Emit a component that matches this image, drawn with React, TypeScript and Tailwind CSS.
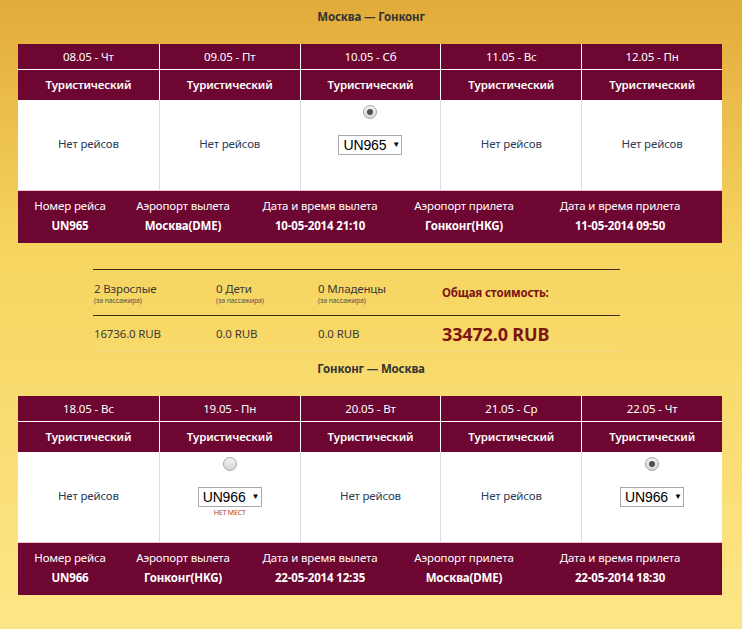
import React from 'react';

type Day = {
    date: string;
    flight?: string;
    checked?: boolean;
    noSeats?: boolean;
};

type Leg = {
    title: string;
    days: Day[];
    info: string[];
};

const legs: Leg[] = [
    {
        title: "Москва — Гонконг",
        days: [
            { date: "08.05 - Чт" },
            { date: "09.05 - Пт" },
            { date: "10.05 - Сб", flight: "UN965", checked: true },
            { date: "11.05 - Вс" },
            { date: "12.05 - Пн" },
        ],
        info: ["UN965", "Москва(DME)", "10-05-2014 21:10", "Гонконг(HKG)", "11-05-2014 09:50"],
    },
    {
        title: "Гонконг — Москва",
        days: [
            { date: "18.05 - Вс" },
            { date: "19.05 - Пн", flight: "UN966", noSeats: true },
            { date: "20.05 - Вт" },
            { date: "21.05 - Ср" },
            { date: "22.05 - Чт", flight: "UN966", checked: true },
        ],
        info: ["UN966", "Гонконг(HKG)", "22-05-2014 12:35", "Москва(DME)", "22-05-2014 18:30"],
    },
];

const labels = ["Номер рейса", "Аэропорт вылета", "Дата и время вылета", "Аэропорт прилета", "Дата и время прилета"];

function Radio({ checked }: { checked?: boolean }) {
    return (
        <span className="w-[14px] h-[14px] rounded-full border border-[#a3a3a3] bg-linear-to-b from-[#f2f2f2] to-[#d6d6d6] flex items-center justify-center">
            {checked && <span className="w-[6px] h-[6px] rounded-full bg-[#505050]" />}
        </span>
    );
}

function Select({ value }: { value: string }) {
    return (
        <div className="h-[20px] w-[64px] border border-[#a9a9a9] bg-white flex items-center pl-[4px] font-['Liberation_Sans',Arial,sans-serif] text-[14px] text-black leading-none">
            <span>{value}</span>
            <span className="text-[8px] ml-[6px]">▼</span>
        </div>
    );
}

function FlightTable({ leg }: { leg: Leg }) {
    return (
        <div className="w-[704px] mx-[18px]">
            <div className="grid grid-cols-5 bg-[#6d0630] text-white border-b border-white">
                {leg.days.map((d, i) => (
                    <div key={i} className={`h-[25px] flex items-center justify-center ${i > 0 ? "border-l border-white" : ""}`}>
                        {d.date}
                    </div>
                ))}
            </div>
            <div className="grid grid-cols-5 bg-[#6d0630] text-white">
                {leg.days.map((d, i) => (
                    <div key={i} className={`h-[30px] flex items-center justify-center font-semibold ${i > 0 ? "border-l border-white" : ""}`}>
                        Туристический
                    </div>
                ))}
            </div>
            <div className="grid grid-cols-5 bg-white border-b border-[#f2c4d4]">
                {leg.days.map((d, i) => (
                    <div key={i} className={`h-[90px] ${i > 0 ? "border-l border-[#d3dfe8]" : ""}`}>
                        {d.flight ? (
                            <div className="flex flex-col items-center pt-[5px]">
                                <Radio checked={d.checked} />
                                <div className="mt-[16px]">
                                    <Select value={d.flight} />
                                </div>
                                {d.noSeats && (
                                    <div className="text-[7px] leading-[9px] mt-[1px] text-[#c0392b] uppercase tracking-tight">нет мест</div>
                                )}
                            </div>
                        ) : (
                            <div className="h-full flex items-center justify-center pb-[3px] text-[#2b3b55]">Нет рейсов</div>
                        )}
                    </div>
                ))}
            </div>
            <div className="bg-[#6d0630] text-white h-[52px] pt-[5px] pr-[14px] grid grid-cols-[104px_122px_152px_136px_176px]">
                {labels.map((l, i) => (
                    <div key={i} className="flex flex-col items-center leading-[20px]">
                        <span>{l}</span>
                        <span className="font-bold">{leg.info[i]}</span>
                    </div>
                ))}
            </div>
        </div>
    );
}

function Title({ text }: { text: string }) {
    return (
        <div className="h-[44px] pt-[9px] text-center font-bold leading-[16px] text-[#333]">{text}</div>
    );
}

function Prices() {
    return (
        <div className="ml-[93px] w-[527px] mt-[26px] border-t border-[#3b2c12] text-[#3a3a3a]">
            <div className="h-[46px] flex items-center border-b border-[#3b2c12]">
                <div className="w-[123px] pl-[1px] pt-[2px]">
                    <div className="leading-[14px]">2 Взрослые</div>
                    <div className="text-[7px] leading-[10px] text-[#555]">(за пассажира)</div>
                </div>
                <div className="w-[102px] pt-[2px]">
                    <div className="leading-[14px]">0 Дети</div>
                    <div className="text-[7px] leading-[10px] text-[#555]">(за пассажира)</div>
                </div>
                <div className="w-[124px] pt-[2px]">
                    <div className="leading-[14px]">0 Младенцы</div>
                    <div className="text-[7px] leading-[10px] text-[#555]">(за пассажира)</div>
                </div>
                <div className="font-bold text-[#7c1414]">Общая стоимость:</div>
            </div>
            <div className="h-[36px] pt-[1px] flex items-center border-b border-[#f3dc8a]">
                <div className="w-[123px] pl-[1px]">16736.0 RUB</div>
                <div className="w-[102px]">0.0 RUB</div>
                <div className="w-[124px]">0.0 RUB</div>
                <div className="font-bold text-[18px] text-[#7c1414]">33472.0 RUB</div>
            </div>
        </div>
    );
}

export default function App() {
    return (
        <div className="w-[742px] min-h-[629px] bg-linear-to-b from-[#e2ab3a] via-[#f6d55f] via-40% to-[#fde687] font-['Noto_Sans','Open_Sans',sans-serif] text-[11.5px] tracking-[-0.15px]">
            <Title text={legs[0].title} />
            <FlightTable leg={legs[0]} />
            <Prices />
            <Title text={legs[1].title} />
            <FlightTable leg={legs[1]} />
        </div>
    );
}
